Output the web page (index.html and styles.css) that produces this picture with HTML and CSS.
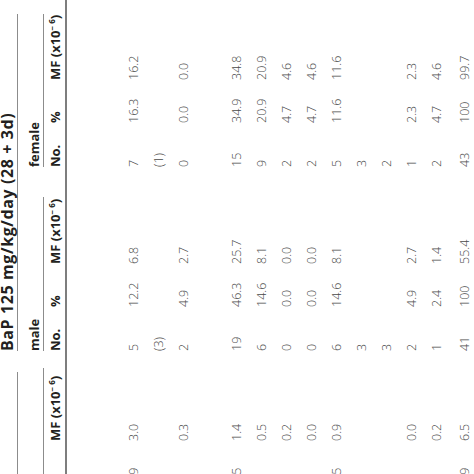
FILE: index.html
```html
<!DOCTYPE html>
<html>
<head>
<meta charset="utf-8">
<link rel="stylesheet" href="styles.css">
</head>
<body>
<div class="stage">
  <div class="table">
    <div class="row head1">
      <div class="grp prev"><span class="ul"></span></div>
      <div class="grp bap"><span class="ul">BaP 125 mg/kg/day (28 + 3d)</span></div>
    </div>
    <div class="row head2">
      <div class="grp prev"><span class="ul"></span></div>
      <div class="grp male"><span class="ul">male</span></div>
      <div class="grp female"><span class="ul">female</span></div>
    </div>
    <div class="row head3">
      <div></div><div>MF (x10<sup>− 6</sup>)</div>
      <div>No.</div><div>%</div><div>MF (x10<sup>− 6</sup>)</div>
      <div>No.</div><div>%</div><div>MF (x10<sup>− 6</sup>)</div>
    </div>
    <div class="body">
      <div class="spacer top"></div>
      <div class="row r"><div>19</div><div>3.0</div><div>5</div><div>12.2</div><div>6.8</div><div>7</div><div>16.3</div><div>16.2</div></div>
      <div class="row r"><div></div><div></div><div>(3)</div><div></div><div></div><div>(1)</div><div></div><div></div></div>
      <div class="row r"><div>1</div><div>0.3</div><div>2</div><div>4.9</div><div>2.7</div><div>0</div><div>0.0</div><div>0.0</div></div>
      <div class="spacer mid"></div>
      <div class="row r"><div>15</div><div>1.4</div><div>19</div><div>46.3</div><div>25.7</div><div>15</div><div>34.9</div><div>34.8</div></div>
      <div class="row r"><div>5</div><div>0.5</div><div>6</div><div>14.6</div><div>8.1</div><div>9</div><div>20.9</div><div>20.9</div></div>
      <div class="row r"><div>2</div><div>0.2</div><div>0</div><div>0.0</div><div>0.0</div><div>2</div><div>4.7</div><div>4.6</div></div>
      <div class="row r"><div>0</div><div>0.0</div><div>0</div><div>0.0</div><div>0.0</div><div>2</div><div>4.7</div><div>4.6</div></div>
      <div class="row r"><div>15</div><div>0.9</div><div>6</div><div>14.6</div><div>8.1</div><div>5</div><div>11.6</div><div>11.6</div></div>
      <div class="row r"><div></div><div></div><div>3</div><div></div><div></div><div>3</div><div></div><div></div></div>
      <div class="row r"><div></div><div></div><div>3</div><div></div><div></div><div>2</div><div></div><div></div></div>
      <div class="row r"><div>0</div><div>0.0</div><div>2</div><div>4.9</div><div>2.7</div><div>1</div><div>2.3</div><div>2.3</div></div>
      <div class="row r"><div>1</div><div>0.2</div><div>1</div><div>2.4</div><div>1.4</div><div>2</div><div>4.7</div><div>4.6</div></div>
      <div class="spacer end"></div>
      <div class="row r"><div>39</div><div>6.5</div><div>41</div><div>100</div><div>55.4</div><div>43</div><div>100</div><div>99.7</div></div>
    </div>
  </div>
</div>
</body>
</html>
```

FILE: styles.css
```css
html, body {
  margin: 0;
  padding: 0;
  background: #fff;
}
body {
  width: 474px;
  height: 474px;
  overflow: hidden;
}
.stage {
  width: 474px;
  height: 474px;
  overflow: hidden;
  transform: rotate(-90deg);
  font-family: "Open Sans", "Liberation Sans", sans-serif;
  color: #555;
}
.table {
  margin-left: -8px;
  width: 500px;
}
.row {
  display: grid;
  grid-template-columns: 41px 90px 44px 43px 97px 44px 43px 98px;
}
.grp .ul {
  display: block;
  border-bottom: 1px solid #8c8c8c;
  font-weight: 700;
  color: #231f20;
  font-size: 13px;
  white-space: nowrap;
}
.head1 {
  height: 18px;
}
.head1 .ul {
  height: 17px;
  line-height: 15px;
  font-size: 16px;
  letter-spacing: 0.6px;
}
.head1 .prev { grid-column: 1 / 3; margin-right: 21px; }
.head1 .bap { grid-column: 3 / 9; margin-right: 32px; }
.head2 {
  height: 26px;
}
.head2 .ul {
  height: 25px;
  line-height: 32px;
}
.head2 .prev { grid-column: 1 / 3; margin-right: 17px; }
.head2 .male { grid-column: 3 / 6; margin-right: 30px; }
.head2 .female { grid-column: 6 / 9; margin-right: 32px; }
.head3 {
  height: 21px;
  line-height: 23px;
  font-size: 13px;
  font-weight: 700;
  color: #231f20;
  border-bottom: 2px solid #7e7e7e;
  white-space: nowrap;
}
.head3 sup {
  font-size: 8px;
  line-height: 0;
  vertical-align: 5px;
}
.spacer.top { height: 54px; }
.spacer.mid { height: 28px; }
.spacer.end { height: 3px; }
.r {
  height: 25px;
  line-height: 25px;
  font-size: 12.5px;
  font-weight: 300;
  color: #4a4a4a;
  white-space: nowrap;
}
```
